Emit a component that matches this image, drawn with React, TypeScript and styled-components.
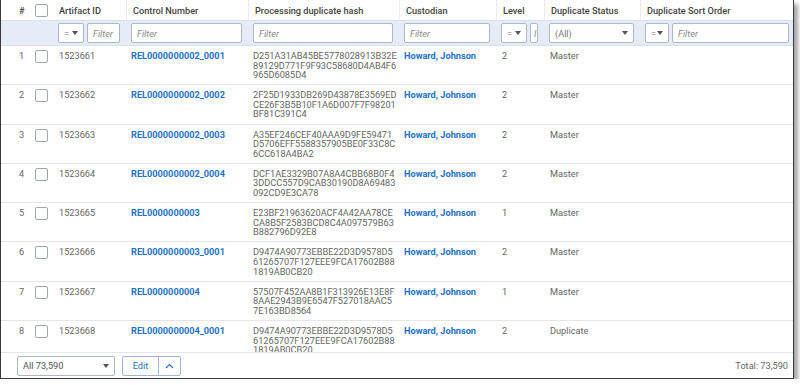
import React from 'react';
import styled, { createGlobalStyle } from 'styled-components';

type Row = {
  id: string
  control: string
  hash: string[]
  level: string
  status: string
}

const rows: Row[] = [
  { id: '1523661', control: 'REL0000000002_0001', hash: ['D251A31AB45BE5778028913B32E', '89129D771F9F93C58680D4AB4F6', '965D6085D4'], level: '2', status: 'Master' },
  { id: '1523662', control: 'REL0000000002_0002', hash: ['2F25D1933DB269D43878E3569ED', 'CE26F3B5B10F1A6D007F7F98201', 'BF81C391C4'], level: '2', status: 'Master' },
  { id: '1523663', control: 'REL0000000002_0003', hash: ['A35EF246CEF40AAA9D9FE59471', 'D5706EFF5588357905BE0F33C8C', '6CC618A4BA2'], level: '2', status: 'Master' },
  { id: '1523664', control: 'REL0000000002_0004', hash: ['DCF1AE3329B07A8A4CBB68B0F4', '3DDCC557D9CAB30190D8A69483', '092CD9E3CA78'], level: '2', status: 'Master' },
  { id: '1523665', control: 'REL0000000003', hash: ['E23BF21963620ACF4A42AA78CE', 'CA8B5F2583BCD8C4A097579B63', 'B882796D92E8'], level: '1', status: 'Master' },
  { id: '1523666', control: 'REL0000000003_0001', hash: ['D9474A90773EBBE22D3D9578D5', '61265707F127EEE9FCA17602B88', '1819AB0CB20'], level: '2', status: 'Master' },
  { id: '1523667', control: 'REL0000000004', hash: ['57507F452AA8B1F313926E13E8F', '8AAE2943B9E6547F527018AAC5', '7E163BD8564'], level: '1', status: 'Master' },
  { id: '1523668', control: 'REL0000000004_0001', hash: ['D9474A90773EBBE22D3D9578D5', '61265707F127EEE9FCA17602B88', '1819AB0CB20'], level: '2', status: 'Duplicate' },
];

const COLS = '30px 22px 73px 122px 151px 97px 48px 96px 1fr';

const GlobalStyle = createGlobalStyle`
  body {
    margin: 0;
    background: #fff;
    font-family: Roboto, "Liberation Sans", sans-serif;
    font-size: 9.2px;
    color: #666;
  }
`;

const Frame = styled.div`
  box-sizing: border-box;
  width: 794px;
  height: 379px;
  border: 1px solid #3a3a3a;
  border-top: none;
  box-shadow: 4px 4px 4px rgba(0, 0, 0, 0.35);
  display: flex;
  flex-direction: column;
  overflow: hidden;
  background: #fff;
`;

const Grid = styled.div`
  display: grid;
  grid-template-columns: ${COLS};
`;

const HeaderRow = styled(Grid)`
  height: 20px;
  align-items: center;
`;

const HeadCell = styled.div<{ $sep?: boolean }>`
  height: 100%;
  display: flex;
  align-items: center;
  padding-left: 6px;
  font-weight: 500;
  color: #444;
  border-left: ${p => (p.$sep ? '1px solid #ececec' : 'none')};
  white-space: nowrap;
`;

const FilterRow = styled(Grid)`
  height: 24px;
  background: #e5ecf7;
  border-top: 1px solid #d9e1ec;
  border-bottom: 1px solid #d9e1ec;
  align-items: center;
`;

const FilterCell = styled.div`
  display: flex;
  gap: 3px;
  padding: 0 6px 0 5px;
`;

const Input = styled.div<{ $w?: number }>`
  height: 20px;
  box-sizing: border-box;
  border: 1px solid #aeb7c3;
  border-radius: 2px;
  background: #fff;
  display: flex;
  align-items: center;
  padding-left: 5px;
  font-style: italic;
  color: #8a8a8a;
  flex: ${p => (p.$w ? `0 0 ${p.$w}px` : '1')};
  overflow: hidden;
`;

const Select = styled(Input)`
  font-style: normal;
  color: #777;
  justify-content: space-between;
  padding-right: 5px;
`;

const Caret = styled.span`
  width: 0;
  height: 0;
  border-left: 3px solid transparent;
  border-right: 3px solid transparent;
  border-top: 4px solid #555;
`;

const Body = styled.div`
  flex: 1;
  overflow: hidden;
`;

const DataRow = styled(Grid)`
  height: 39.3px;
  box-sizing: border-box;
  border-bottom: 1px solid #e6e6e6;
  padding-top: 4px;
`;

const Cell = styled.div`
  padding-left: 6px;
  line-height: 11px;
`;

const NumCell = styled(Cell)`
  padding-left: 18px;
`;

const Link = styled(Cell)`
  color: #1f72c6;
  font-weight: 700;
  padding-left: 5px;
`;

const HashCell = styled(Cell)`
  line-height: 9.6px;
  padding-left: 5px;
  padding-top: 1px;
`;

const Box = styled.span`
  display: block;
  width: 11px;
  height: 11px;
  border: 1px solid #9ea6b0;
  border-radius: 2px;
  margin-left: 4px;
  background: #fff;
`;

const Footer = styled.div`
  height: 25px;
  border-top: 1px solid #e6e6e6;
  display: flex;
  align-items: center;
  padding: 0 5px 0 16px;
  gap: 7px;
`;

const PageSelect = styled(Select)`
  flex: 0 0 98px;
  color: #555;
`;

const ButtonGroup = styled.div`
  display: flex;
  height: 20px;
  border: 1px solid #9fb8d9;
  border-radius: 2px;
  box-sizing: border-box;
`;

const Btn = styled.div<{ $w: number }>`
  width: ${p => p.$w}px;
  display: flex;
  align-items: center;
  justify-content: center;
  color: #1f72c6;
  & + & {
    border-left: 1px solid #9fb8d9;
  }
`;

const Total = styled.div`
  margin-left: auto;
  color: #666;
`;

const App = () => {
  return (
    <>
      <GlobalStyle />
      <Frame>
        <HeaderRow>
          <HeadCell style={{ paddingLeft: 18 }}>#</HeadCell>
          <HeadCell style={{ paddingLeft: 0 }}><Box /></HeadCell>
          <HeadCell>Artifact ID</HeadCell>
          <HeadCell $sep>Control Number</HeadCell>
          <HeadCell $sep>Processing duplicate hash</HeadCell>
          <HeadCell $sep>Custodian</HeadCell>
          <HeadCell $sep>Level</HeadCell>
          <HeadCell $sep>Duplicate Status</HeadCell>
          <HeadCell $sep>Duplicate Sort Order</HeadCell>
        </HeaderRow>
        <FilterRow>
          <div />
          <div />
          <FilterCell>
            <Select $w={26}>=<Caret /></Select>
            <Input>Filter</Input>
          </FilterCell>
          <FilterCell><Input>Filter</Input></FilterCell>
          <FilterCell><Input>Filter</Input></FilterCell>
          <FilterCell><Input>Filter</Input></FilterCell>
          <FilterCell>
            <Select $w={26}>=<Caret /></Select>
            <Input style={{ paddingLeft: 3 }}>I</Input>
          </FilterCell>
          <FilterCell><Select>(All)<Caret /></Select></FilterCell>
          <FilterCell style={{ paddingRight: 4 }}>
            <Select $w={24}>=<Caret /></Select>
            <Input>Filter</Input>
          </FilterCell>
        </FilterRow>
        <Body>
          {rows.map((r, i) => (
            <DataRow key={r.id}>
              <NumCell>{i + 1}</NumCell>
              <div><Box /></div>
              <Cell>{r.id}</Cell>
              <Link>{r.control}</Link>
              <HashCell>{r.hash.map(l => <div key={l}>{l}</div>)}</HashCell>
              <Link>Howard, Johnson</Link>
              <Cell>{r.level}</Cell>
              <Cell>{r.status}</Cell>
              <Cell />
            </DataRow>
          ))}
        </Body>
        <Footer>
          <PageSelect>All 73,590<Caret /></PageSelect>
          <ButtonGroup>
            <Btn $w={35}>Edit</Btn>
            <Btn $w={21}>
              <svg width="9" height="6" viewBox="0 0 9 6">
                <path d="M1 5 L4.5 1.5 L8 5" fill="none" stroke="#1f72c6" strokeWidth="1.2" />
              </svg>
            </Btn>
          </ButtonGroup>
          <Total>Total: 73,590</Total>
        </Footer>
      </Frame>
    </>
  );
};

export default App;
